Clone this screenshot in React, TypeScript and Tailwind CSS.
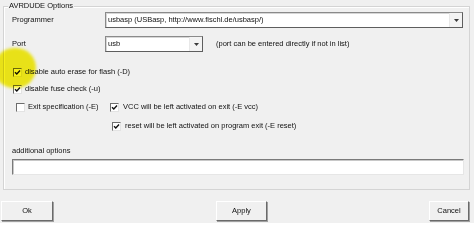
import React from "react";

function Check({ checked }: { checked: boolean }) {
  return (
    <span className="relative inline-block h-[9px] w-[9px] shrink-0 border border-t-[#6d6d6d] border-l-[#6d6d6d] border-r-[#e3e3e3] border-b-[#e3e3e3] bg-white">
      {checked && (
        <svg viewBox="0 0 7 7" className="absolute left-0 top-0 h-[7px] w-[7px]">
          <path d="M1 3.2 L2.8 5 L6 1.6" fill="none" stroke="#111" strokeWidth="1.4" />
        </svg>
      )}
    </span>
  );
}

function Arrow() {
  return (
    <span className="flex h-full w-[13px] items-center justify-center border-l border-[#e8e8e8] bg-[#f3f3f3]">
      <svg viewBox="0 0 5 3" className="h-[3px] w-[5px]">
        <path d="M0 0 H5 L2.5 3 Z" fill="#3a3a3a" />
      </svg>
    </span>
  );
}

function Combo({ value, width }: { value: string; width: string }) {
  return (
    <div
      className={`${width} flex h-[16px] items-stretch border border-[#8a8a8a] border-r-[#5e5e5e] border-b-[#5e5e5e] bg-white shadow-[inset_1px_1px_0_#d6d6d6]`}
    >
      <span className="flex flex-1 items-center pl-[2px]">{value}</span>
      <Arrow />
    </div>
  );
}

function Btn({ label, width }: { label: string; width: string }) {
  return (
    <button
      className={`${width} flex h-[20px] items-center justify-center border border-t-white border-l-white border-r-[#6a6a6a] border-b-[#6a6a6a] bg-[#f0f0f0] shadow-[1px_1px_0_#a0a0a0]`}
    >
      {label}
    </button>
  );
}

export default function App() {
  return (
    <div
      className="relative h-[223px] w-[474px] overflow-hidden bg-[#f0f0f0] text-[7.5px] leading-none text-[#111]"
      style={{ fontFamily: '"Liberation Sans", Arial, sans-serif' }}
    >
      <div className="relative mx-[3px] mt-[6px] w-[467px] border border-[#d4d4d4] pb-[14px] pl-[8px] shadow-[inset_1px_1px_0_#fff]">
        <span className="absolute left-[4px] top-[-5px] bg-[#f0f0f0] px-[1px]">AVRDUDE Options</span>

        <div className="mt-[5px] flex items-center">
          <span className="w-[93px]">Programmer</span>
          <Combo value="usbasp (USBasp, http://www.fischl.de/usbasp/)" width="w-[358px]" />
        </div>

        <div className="mt-[8px] flex items-center">
          <span className="w-[93px]">Port</span>
          <Combo value="usb" width="w-[98px]" />
          <span className="ml-[13px]">(port can be entered directly if not in list)</span>
        </div>

        <div className="mt-[14px] flex h-[12px] items-center gap-[3px] pl-[1px]">
          <Check checked />
          <span>disable auto erase for flash (-D)</span>
        </div>

        <div className="mt-[5px] flex h-[12px] items-center gap-[3px] pl-[1px]">
          <Check checked />
          <span>disable fuse check (-u)</span>
        </div>

        <div className="mt-[6px] flex h-[12px] items-center pl-[4px]">
          <div className="flex w-[94px] items-center gap-[3px]">
            <Check checked={false} />
            <span>Exit specification (-E)</span>
          </div>
          <div className="flex items-center gap-[4px]">
            <Check checked />
            <span>VCC will be left activated on exit (-E vcc)</span>
          </div>
        </div>

        <div className="mt-[7px] flex h-[12px] items-center gap-[4px] pl-[100px]">
          <Check checked />
          <span>reset will be left activated on program exit (-E reset)</span>
        </div>

        <div className="mt-[13px] flex h-[12px] items-center">additional options</div>

        <div className="mt-[2px] h-[16px] w-[452px] border border-t-[#7a7a7a] border-l-[#7a7a7a] border-r-[#e6e6e6] border-b-[#e6e6e6] bg-white shadow-[inset_1px_1px_0_#c8c8c8]" />
      </div>

      <div className="mt-[11px] flex items-center pl-[1px]">
        <Btn label="Ok" width="w-[52px]" />
        <div className="ml-[163px]">
          <Btn label="Apply" width="w-[51px]" />
        </div>
        <div className="ml-[162px]">
          <Btn label="Cancel" width="w-[40px]" />
        </div>
      </div>

      <div className="pointer-events-none absolute left-[-6px] top-[48px] h-[40px] w-[42px] rounded-full bg-[#f7ef00] opacity-90 mix-blend-multiply blur-[1.5px]" />
    </div>
  );
}
